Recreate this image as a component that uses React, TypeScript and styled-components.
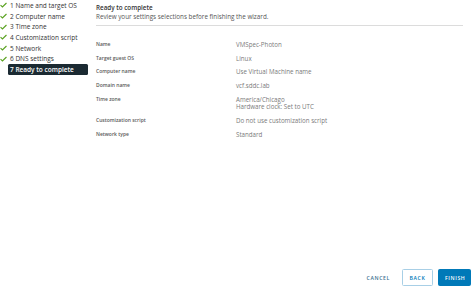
import React from "react";
import styled, { createGlobalStyle } from "styled-components";

const Global = createGlobalStyle`
  html, body { margin: 0; padding: 0; background: #fff; }
  body { font-family: "Open Sans", "Liberation Sans", sans-serif; }
  #root { width: 474px; height: 287px; overflow: hidden; }
`;

const Shell = styled.div`
  display: flex;
  width: 474px;
  height: 287px;
`;

const Nav = styled.nav`
  width: 96px;
  flex: none;
  display: flex;
  flex-direction: column;
`;

const Step = styled.div<{ $active?: boolean }>`
  display: flex;
  align-items: center;
  height: 10.7px;
  margin-left: ${(p) => (p.$active ? "8px" : "0")};
  margin-right: 8px;
  padding-left: ${(p) => (p.$active ? "2px" : "0")};
  background: ${(p) => (p.$active ? "#1b2a32" : "transparent")};
  border-radius: 1.5px;
  color: ${(p) => (p.$active ? "#fff" : "#333")};
  font-size: 6.5px;
  font-weight: ${(p) => (p.$active ? 600 : 400)};
  white-space: nowrap;
`;

const Check = styled.svg`
  width: 7px;
  height: 6px;
  margin-right: 3px;
  flex: none;
`;

const Main = styled.main`
  flex: 1;
  display: flex;
  flex-direction: column;
  padding-right: 11px;
`;

const Header = styled.header`
  padding-top: 2.5px;
  padding-bottom: 4.5px;
  border-bottom: 1px solid #dcdcdc;
`;

const Title = styled.div`
  font-size: 6.3px;
  font-weight: 600;
  color: #333;
  line-height: 9px;
`;

const Subtitle = styled.div`
  font-size: 6.3px;
  color: #555;
  line-height: 9px;
`;

const Grid = styled.div`
  display: grid;
  grid-template-columns: 140px 1fr;
  row-gap: 6.1px;
  margin-top: 15px;
`;

const Label = styled.div`
  font-size: 5px;
  font-weight: 600;
  color: #5a5a5a;
  line-height: 7.6px;
`;

const Value = styled.div`
  font-size: 6.2px;
  color: #7a7a7a;
  line-height: 7.6px;
`;

const Footer = styled.footer`
  margin-top: auto;
  display: flex;
  justify-content: flex-end;
  align-items: center;
  gap: 5px;
  margin-right: -8px;
  padding-bottom: 1px;
`;

const Btn = styled.button<{ $kind: "flat" | "outline" | "solid" }>`
  height: 17px;
  padding: 0 6px;
  border-radius: 1.5px;
  font-family: "Open Sans", "Liberation Sans", sans-serif;
  font-size: 5.2px;
  font-weight: 600;
  letter-spacing: 0.6px;
  border: 1px solid ${(p) => (p.$kind === "outline" ? "#a8cfe6" : p.$kind === "solid" ? "#0079b8" : "transparent")};
  background: ${(p) => (p.$kind === "solid" ? "#0079b8" : "#fff")};
  color: ${(p) => (p.$kind === "solid" ? "#fff" : p.$kind === "flat" ? "#3b6f8f" : "#0079b8")};
  ${(p) => p.$kind === "outline" && "width: 31px;"}
  ${(p) => p.$kind === "solid" && "width: 33px;"}
`;

const steps = [
  "1 Name and target OS",
  "2 Computer name",
  "3 Time zone",
  "4 Customization script",
  "5 Network",
  "6 DNS settings",
];

const rows: [string, string[]][] = [
  ["Name", ["VMSpec-Photon"]],
  ["Target guest OS", ["Linux"]],
  ["Computer name", ["Use Virtual Machine name"]],
  ["Domain name", ["vcf.sddc.lab"]],
  ["Time zone", ["America/Chicago", "Hardware clock: Set to UTC"]],
  ["Customization script", ["Do not use customization script"]],
  ["Network type", ["Standard"]],
];

export default function App() {
  return (
    <>
      <Global />
      <Shell>
        <Nav>
          {steps.map((s) => (
            <Step key={s}>
              <Check viewBox="0 0 8 6">
                <path d="M0.6 3.2 L2.8 5.2 L7.4 0.7" fill="none" stroke="#5aa220" strokeWidth="1.3" />
              </Check>
              {s}
            </Step>
          ))}
          <Step $active>7 Ready to complete</Step>
        </Nav>
        <Main>
          <Header>
            <Title>Ready to complete</Title>
            <Subtitle>Review your settings selections before finishing the wizard.</Subtitle>
          </Header>
          <Grid>
            {rows.map(([l, v]) => (
              <React.Fragment key={l}>
                <Label>{l}</Label>
                <Value>
                  {v.map((t) => (
                    <div key={t}>{t}</div>
                  ))}
                </Value>
              </React.Fragment>
            ))}
          </Grid>
          <Footer>
            <Btn $kind="flat">CANCEL</Btn>
            <Btn $kind="outline">BACK</Btn>
            <Btn $kind="solid">FINISH</Btn>
          </Footer>
        </Main>
      </Shell>
    </>
  );
}
